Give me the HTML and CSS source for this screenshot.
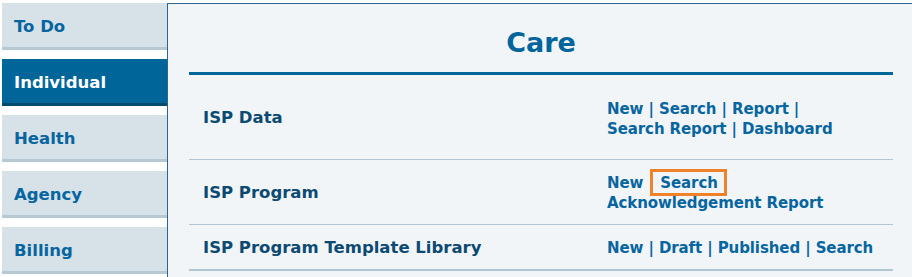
FILE: index.html
```html
<!DOCTYPE html>
<html>
<head>
<meta charset="utf-8">
<link rel="stylesheet" href="styles.css">
</head>
<body>
<div class="page">
  <nav class="tabs">
    <div class="tab">To Do</div>
    <div class="tab active">Individual</div>
    <div class="tab">Health</div>
    <div class="tab">Agency</div>
    <div class="tab">Billing</div>
  </nav>
  <main class="panel">
    <h1 class="title">Care</h1>
    <div class="rule"></div>
    <div class="rows">
      <div class="row r1">
        <div class="label">ISP Data</div>
        <div class="links"><a>New</a> | <a>Search</a> | <a>Report</a> |<br><a>Search Report</a> | <a>Dashboard</a></div>
      </div>
      <div class="row r2">
        <div class="label">ISP Program</div>
        <div class="links"><a>New</a><a class="boxed">Search</a><br><a>Acknowledgement Report</a></div>
      </div>
      <div class="row r3 last">
        <div class="label">ISP Program Template Library</div>
        <div class="links"><a>New</a> | <a>Draft</a> | <a>Published</a> | <a>Search</a></div>
      </div>
    </div>
  </main>
</div>
</body>
</html>
```
FILE: styles.css
```css
html, body {
  margin: 0;
  padding: 0;
  background: #ffffff;
}
body {
  font-family: "DejaVu Sans", Verdana, sans-serif;
  font-weight: bold;
  font-size: 15px;
  overflow: hidden;
}
.page {
  display: flex;
  padding: 3px 0 0 2px;
  height: 274px;
}
.tabs {
  width: 165px;
  flex: none;
  display: flex;
  flex-direction: column;
  gap: 9px;
}
.tab {
  height: 44px;
  border-bottom: 3px solid #b5c8d4;
  background: #d6e1e8;
  color: #0765a0;
  padding-left: 12px;
  line-height: 47px;
  font-size: 16.5px;
  overflow: hidden;
}
.tab.active {
  background: #006699;
  color: #ffffff;
  border-bottom-color: #004a6e;
}
.panel {
  flex: 1;
  background: #f1f5f8;
  border-top: 1px solid #2a6592;
  border-left: 1px solid #2a6592;
  padding: 0 19px 0 21px;
}
.title {
  margin: 0;
  padding-top: 22px;
  line-height: 34px;
  height: 34px;
  text-align: center;
  font-size: 27px;
  color: #00659c;
}
.rule {
  margin-top: 12px;
  height: 3px;
  background: #006699;
}
.row {
  display: grid;
  grid-template-columns: 418px 1fr;
  align-items: center;
  border-bottom: 1px solid #b2c5d3;
}
.row.r1 { height: 84px; }
.row.r2 { height: 64px; }
.row.r3 { height: 44px; }
.row.last { border-bottom: 2px solid #b2c5d3; }
.label {
  padding-left: 14px;
  font-size: 16.5px;
  color: #0d4a72;
}
.links {
  color: #0765a0;
  line-height: 20px;
  padding-top: 2px;
  letter-spacing: -0.1px;
}
.r1 .links { padding-top: 4px; }
.links a {
  color: #0765a0;
  text-decoration: none;
}
.boxed {
  position: relative;
  margin-left: 17px;
}
.boxed::after {
  content: "";
  position: absolute;
  left: -10px;
  right: -9px;
  top: -5px;
  bottom: -4px;
  border: 3px solid #f0822a;
}
```
